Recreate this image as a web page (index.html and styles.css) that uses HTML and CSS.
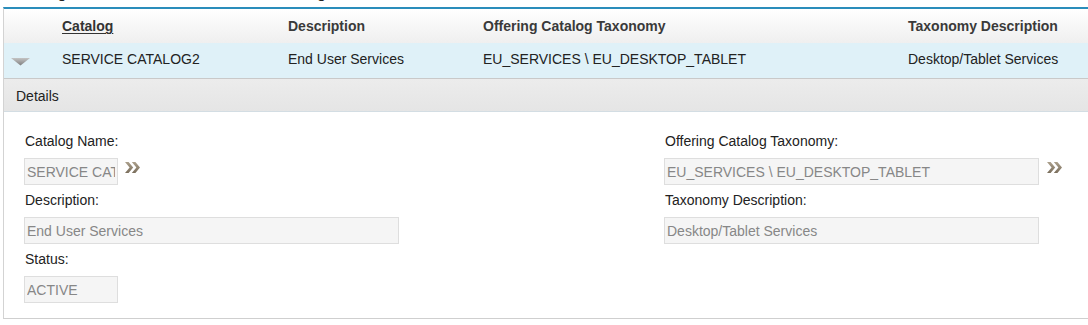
FILE: index.html
```html
<!DOCTYPE html>
<html>
<head>
<meta charset="utf-8">
<link rel="stylesheet" href="styles.css">
</head>
<body>
<div class="top-title"><span class="t1">Catalog</span><span class="t2">Catalog</span></div>
<div class="panel">
  <div class="row head">
    <div class="cell"></div>
    <div class="cell"><span class="sorted">Catalog</span></div>
    <div class="cell">Description</div>
    <div class="cell">Offering Catalog Taxonomy</div>
    <div class="cell">Taxonomy Description</div>
  </div>
  <div class="row data">
    <div class="cell expander">
      <svg width="20" height="8" viewBox="0 0 20 8">
        <defs>
          <linearGradient id="tri" x1="0" y1="0" x2="0" y2="1">
            <stop offset="0" stop-color="#c4c4c4"/>
            <stop offset="1" stop-color="#7e7e7e"/>
          </linearGradient>
        </defs>
        <polygon points="0,0 19,0 9.5,7.5" fill="url(#tri)"/>
      </svg>
    </div>
    <div class="cell">SERVICE CATALOG2</div>
    <div class="cell">End User Services</div>
    <div class="cell">EU_SERVICES \ EU_DESKTOP_TABLET</div>
    <div class="cell">Desktop/Tablet Services</div>
  </div>
  <div class="details-bar">Details</div>
  <div class="details-body">
    <div class="col">
      <div class="field">
        <div class="label">Catalog Name:</div>
        <div class="control">
          <input class="box short" readonly value="SERVICE CATALOG2">
          <svg class="more" width="16" height="11" viewBox="0 0 16 11">
            <defs>
              <linearGradient id="chev1" x1="0" y1="0" x2="0" y2="1">
                <stop offset="0" stop-color="#aca08c"/>
                <stop offset="1" stop-color="#7a6e5c"/>
              </linearGradient>
            </defs>
            <polygon points="0,0 3.6,0 8.2,5.5 3.6,11 0,11 4.6,5.5" fill="url(#chev1)"/>
            <polygon points="6.8,0 10.4,0 15,5.5 10.4,11 6.8,11 11.4,5.5" fill="url(#chev1)"/>
          </svg>
        </div>
      </div>
      <div class="field">
        <div class="label">Description:</div>
        <div class="control">
          <input class="box long" readonly value="End User Services">
        </div>
      </div>
      <div class="field">
        <div class="label">Status:</div>
        <div class="control">
          <input class="box short" readonly value="ACTIVE">
        </div>
      </div>
    </div>
    <div class="col">
      <div class="field">
        <div class="label">Offering Catalog Taxonomy:</div>
        <div class="control">
          <input class="box long" readonly value="EU_SERVICES \ EU_DESKTOP_TABLET">
          <svg class="more wide" width="16" height="11" viewBox="0 0 16 11">
            <defs>
              <linearGradient id="chev2" x1="0" y1="0" x2="0" y2="1">
                <stop offset="0" stop-color="#aca08c"/>
                <stop offset="1" stop-color="#7a6e5c"/>
              </linearGradient>
            </defs>
            <polygon points="0,0 3.6,0 8.2,5.5 3.6,11 0,11 4.6,5.5" fill="url(#chev2)"/>
            <polygon points="6.8,0 10.4,0 15,5.5 10.4,11 6.8,11 11.4,5.5" fill="url(#chev2)"/>
          </svg>
        </div>
      </div>
      <div class="field">
        <div class="label">Taxonomy Description:</div>
        <div class="control">
          <input class="box long" readonly value="Desktop/Tablet Services">
        </div>
      </div>
    </div>
  </div>
</div>
</body>
</html>
```

FILE: styles.css
```css
html, body {
  margin: 0;
  padding: 0;
  background: #ffffff;
  overflow: hidden;
}
body {
  font-family: "Liberation Sans", Arial, sans-serif;
  font-size: 14px;
  color: #222222;
}
.top-title {
  height: 7px;
  overflow: visible;
  display: flex;
  font-weight: bold;
  color: #222;
  line-height: 16px;
}
.top-title span {
  margin-top: -15px;
}
.top-title .t1 { margin-left: 15px; }
.top-title .t2 { margin-left: 208px; }

.panel {
  margin-left: 3px;
  margin-right: -6px;
  border-top: 2px solid #2a8dbb;
  border-left: 1px solid #d3d3d3;
  border-right: 1px solid #d3d3d3;
  border-bottom: 1px solid #cfcfcf;
}
.row {
  display: grid;
  grid-template-columns: 50px 226px 195px 425px 1fr;
  align-items: center;
}
.cell {
  padding-left: 8px;
  white-space: nowrap;
}
.head {
  height: 34px;
  background: linear-gradient(#ffffff, #efefef);
  font-weight: bold;
  color: #3a3a3a;
}
.sorted {
  text-decoration: underline;
  text-decoration-thickness: 1px;
  text-underline-offset: 2px;
  color: #333;
}
.data {
  height: 35px;
  background: #dff1f8;
  border-bottom: 1px solid #c9c9c9;
  color: #222;
}
.data .cell {
  padding-bottom: 3px;
}
.data .expander {
  padding-left: 7px;
  padding-bottom: 0;
  display: flex;
  align-items: center;
  padding-top: 3px;
}
.details-bar {
  height: 32px;
  line-height: 34px;
  padding-left: 12px;
  background: linear-gradient(#ececec, #e5e5e5);
  border-bottom: 1px solid #d3dde3;
  color: #222;
}
.details-body {
  display: grid;
  grid-template-columns: 640px 1fr;
  padding: 21px 0 0 20px;
  height: 185px;
}
.col {
  display: flex;
  flex-direction: column;
}
.field {
  display: flex;
  flex-direction: column;
  margin-bottom: 7px;
}
.label {
  line-height: 16px;
  height: 16px;
  margin-bottom: 9px;
  padding-left: 1px;
  color: #222;
}
.control {
  display: flex;
  align-items: center;
  height: 27px;
}
.box {
  box-sizing: border-box;
  height: 27px;
  margin: 0;
  padding: 0 2px;
  border: 1px solid #dedede;
  background: #f5f5f5;
  color: #878787;
  font-family: "Liberation Sans", Arial, sans-serif;
  font-size: 14px;
  outline: none;
  border-radius: 0;
}
.short { width: 94px; }
.long { width: 375px; }
.more {
  margin-left: 7px;
  margin-top: -8px;
}
.more.wide {
  margin-left: 8px;
}
```
